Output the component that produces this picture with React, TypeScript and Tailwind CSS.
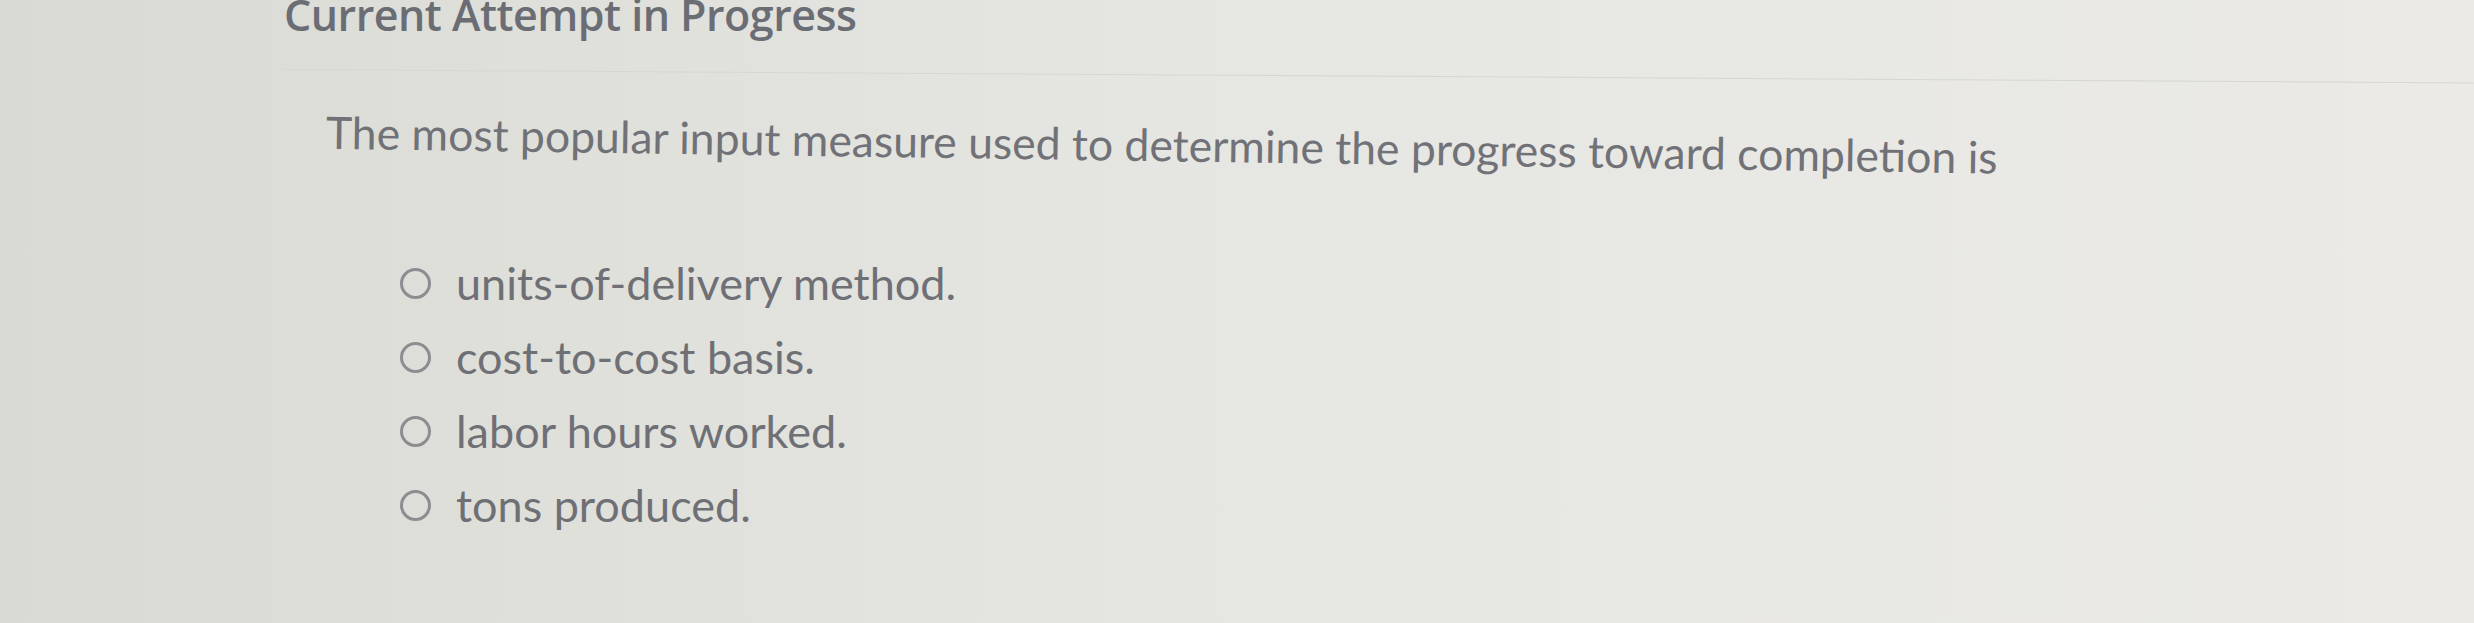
const options = [
  "units-of-delivery method.",
  "cost-to-cost basis.",
  "labor hours worked.",
  "tons produced.",
];

export default function App() {
  return (
    <div className="h-[623px] w-full overflow-hidden bg-gradient-to-r from-[#dadad5] via-[#e6e6e2] to-[#ebeae6]">
      <div className="pl-[284px]">
        <h2
          className="-mt-[7px] text-[43px] leading-[43px] font-semibold tracking-[-0.5px] text-[#6b6d75]"
          style={{ fontFamily: '"Open Sans", sans-serif' }}
        >
          Current Attempt in Progress
        </h2>
        <div className="mt-[33px] h-px origin-left rotate-[0.35deg] bg-[#d6d6d2]" />
      </div>

      <div style={{ fontFamily: "Lato, sans-serif" }}>
        <p className="mt-[35px] origin-left rotate-[0.85deg] pl-[326px] text-[44.5px] leading-[44px] text-[#717277]">
          The most popular input measure used to determine the progress toward completion is
        </p>

        <ul className="mt-[112px] flex flex-col gap-[29px] pl-[400px]">
          {options.map((opt) => (
            <li key={opt} className="flex h-[45px] items-center gap-[25px]">
              <span className="h-[31px] w-[31px] shrink-0 rounded-full border-[3px] border-[#8d8d91]" />
              <span className="text-[45px] leading-[45px] text-[#6f7075]">{opt}</span>
            </li>
          ))}
        </ul>
      </div>
    </div>
  );
}
